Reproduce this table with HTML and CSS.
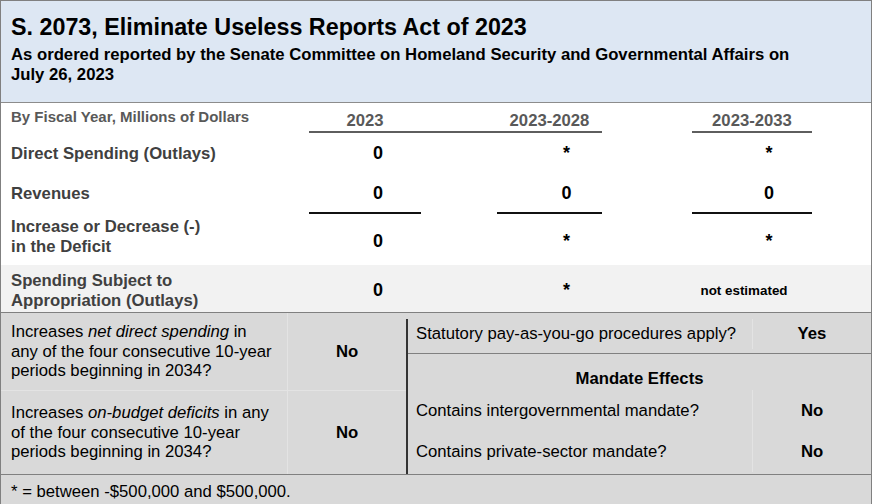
FILE: index.html
```html
<!DOCTYPE html>
<html lang="en">
<head>
<meta charset="utf-8">
<title>S. 2073, Eliminate Useless Reports Act of 2023</title>
<link rel="stylesheet" href="styles.css">
</head>
<body>
<div class="report">
  <header class="head">
    <h1 class="title">S. 2073, Eliminate Useless Reports Act of 2023</h1>
    <p class="sub">As ordered reported by the Senate Committee on Homeland Security and Governmental Affairs on<br>July 26, 2023</p>
  </header>

  <section class="est">
    <div class="row row-head">
      <div class="lab unit">By Fiscal Year, Millions of Dollars</div>
      <div class="colh c1">2023</div>
      <div class="rule"></div>
      <div class="colh c2">2023-2028</div>
      <div class="colh c3">2023-2033</div>
    </div>
    <div class="row r-direct">
      <div class="lab">Direct Spending (Outlays)</div>
      <div class="val c1">0</div>
      <div class="val c2">*</div>
      <div class="val c3">*</div>
    </div>
    <div class="row r-rev">
      <div class="lab">Revenues</div>
      <div class="val c1 total">0</div>
      <div class="val c2 total">0</div>
      <div class="val c3 total">0</div>
    </div>
    <div class="row r-def">
      <div class="lab">Increase or Decrease (-)<br>in the Deficit</div>
      <div class="val c1">0</div>
      <div class="val c2">*</div>
      <div class="val c3">*</div>
    </div>
    <div class="row r-approp">
      <div class="lab">Spending Subject to<br>Appropriation (Outlays)</div>
      <div class="val c1">0</div>
      <div class="val c2">*</div>
      <div class="val c3 small">not estimated</div>
    </div>
  </section>

  <section class="flags">
    <div class="left">
      <div class="q q1">
        <div class="qt">Increases <i>net direct spending</i> in<br>any of the four consecutive 10-year<br>periods beginning in 2034?</div>
        <div class="ans">No</div>
      </div>
      <div class="q q2">
        <div class="qt">Increases <i>on-budget deficits</i> in any<br>of the four consecutive 10-year<br>periods beginning in 2034?</div>
        <div class="ans">No</div>
      </div>
    </div>
    <div class="right">
      <div class="rq stat">
        <div class="qt">Statutory pay-as-you-go procedures apply?</div>
        <div class="ans">Yes</div>
      </div>
      <div class="mand">Mandate Effects</div>
      <div class="rq">
        <div class="qt">Contains intergovernmental mandate?</div>
        <div class="ans">No</div>
      </div>
      <div class="rq">
        <div class="qt">Contains private-sector mandate?</div>
        <div class="ans">No</div>
      </div>
    </div>
  </section>

  <footer class="foot">* = between -$500,000 and $500,000.</footer>
</div>
</body>
</html>
```

FILE: styles.css
```css
* { box-sizing: border-box; }

body {
  margin: 0;
  font-family: "Liberation Sans", Arial, sans-serif;
  font-size: 16.7px;
  color: #000;
  background: #fff;
}

.report {
  width: 872px;
  border: 1px solid #808080;
}

/* ---------- header ---------- */
.head {
  height: 102px;
  padding: 13px 10px 0;
  background: #dde7f3;
  border-bottom: 1px solid #8c8c8c;
}
.title {
  margin: 0;
  font-size: 23.3px;
  line-height: 27px;
  font-weight: bold;
}
.sub {
  margin: 4px 0 0;
  font-size: 16.7px;
  line-height: 19.5px;
  font-weight: bold;
}

/* ---------- estimate table ---------- */
.est {
  border-bottom: 1px solid #808080;
}
.row {
  display: grid;
  grid-template-columns: 298px 112px 76px 105px 90px 120px 1fr;
  padding-left: 10px;
}
.lab {
  grid-column: 1;
  font-weight: bold;
  color: #404040;
  line-height: 19.5px;
  align-self: center;
}
.c1 { grid-column: 2; }
.c2 { grid-column: 4; }
.c3 { grid-column: 6; }

.row-head {
  height: 30px;
  align-items: end;
}
.unit {
  align-self: start;
  padding-top: 5px;
  font-size: 15px;
  line-height: 18px;
  color: #595959;
}
.colh {
  text-align: center;
  font-weight: bold;
  color: #595959;
  line-height: 20px;
  border-bottom: 2px solid #5e5e5e;
}
.rule {
  grid-column: 3;
  border-bottom: 2px solid #5e5e5e;
}

.val {
  display: flex;
  align-items: center;
  justify-content: center;
  font-weight: bold;
  font-size: 18px;
}
.val.c1 { padding-left: 26px; }
.val.c2 { padding-left: 34px; }
.val.c3 { padding-left: 34px; }
.val.small {
  font-size: 13.4px;
  padding-left: 0;
  padding-right: 16px;
}

.r-direct { height: 41px; }
.r-rev { height: 40px; }
.total { border-bottom: 2px solid #111; }
.r-def {
  height: 51px;
  padding-top: 3px;
}
.r-def .lab { align-self: start; }
.r-approp {
  height: 47px;
  padding-top: 4px;
  background: #f2f2f2;
}

/* ---------- flags ---------- */
.flags {
  display: grid;
  grid-template-columns: 405px 1fr;
  background: #d9d9d9;
  border-bottom: 1px solid #808080;
}
.q {
  display: grid;
  grid-template-columns: 286px 1fr;
  align-items: center;
}
.q1 {
  height: 78px;
  border-bottom: 1px solid #e3e3e3;
}
.q2 { height: 83px; }
.qt {
  line-height: 19.5px;
  padding-left: 10px;
}
.q .ans {
  align-self: stretch;
  display: flex;
  align-items: center;
  justify-content: center;
  border-left: 1px solid #e3e3e3;
}
.ans {
  font-weight: bold;
  text-align: center;
}

.right {
  margin-top: 6px;
  border-left: 2px solid #333;
}
.rq {
  display: grid;
  grid-template-columns: 344px 1fr;
  align-items: center;
  height: 41px;
}
.rq .qt { padding-left: 8px; }
.rq .ans {
  align-self: stretch;
  display: flex;
  align-items: center;
  justify-content: center;
  border-left: 1px solid #e3e3e3;
}
.rq.stat {
  height: 35px;
  padding-bottom: 4px;
  border-bottom: 1px solid #808080;
}
.mand {
  height: 36px;
  padding-top: 15px;
  line-height: 20px;
  text-align: center;
  font-weight: bold;
}

/* ---------- footer ---------- */
.foot {
  background: #d9d9d9;
  padding: 7px 10px 10px;
  line-height: 19.5px;
}
```
